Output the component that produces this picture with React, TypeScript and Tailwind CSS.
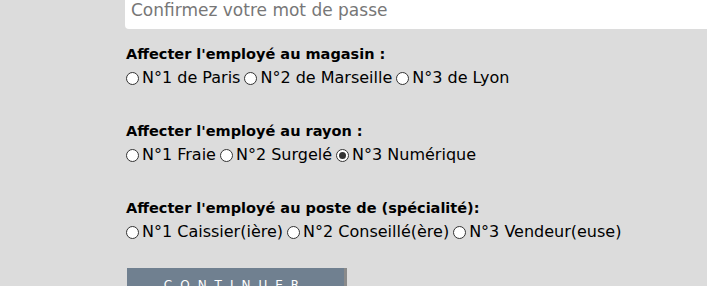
import React from "react";

interface IRadioGroupProps {
  title: string;
  name: string;
  options: string[];
  checked?: number;
}

function Radio({ on }: { on: boolean }) {
  return (
    <span className="inline-flex h-[13px] w-[13px] shrink-0 items-center justify-center rounded-full border border-[#333] bg-white">
      {on && <span className="h-[7px] w-[7px] rounded-full bg-[#333]" />}
    </span>
  );
}

function RadioGroup({ title, name, options, checked }: IRadioGroupProps) {
  return (
    <div className="flex flex-col">
      <p className="font-bold text-[14.5px] leading-[20px] text-black">{title}</p>
      <div className="mt-[2px] flex items-center text-[16px] leading-[24px] text-black">
        {options.map((opt, i) => (
          <label key={name + i} className="flex items-center gap-[3px] mr-[4px]">
            <Radio on={checked === i} />
            <span>{opt}</span>
          </label>
        ))}
      </div>
    </div>
  );
}

export default function App(): React.ReactNode {
  return (
    <div
      className="h-[286px] w-[707px] overflow-hidden bg-[#dcdcdc] pl-[125px]"
      style={{ fontFamily: '"Comic Sans MS", "DejaVu Sans", sans-serif' }}
    >
      <div className="mt-[-14px] flex h-[43px] items-end rounded-bl-[4px] bg-white pb-[7px] pl-[6px]">
        <span className="text-[17px] leading-[24px] text-[#777]">
          Confirmez votre mot de passe
        </span>
      </div>
      <div className="mt-[15px] flex flex-col gap-[31px] pl-[1px]">
        <RadioGroup
          title="Affecter l'employé au magasin :"
          name="magasin"
          options={["N°1 de Paris", "N°2 de Marseille", "N°3 de Lyon"]}
        />
        <RadioGroup
          title="Affecter l'employé au rayon :"
          name="rayon"
          options={["N°1 Fraie", "N°2 Surgelé", "N°3 Numérique"]}
          checked={2}
        />
        <RadioGroup
          title="Affecter l'employé au poste de (spécialité):"
          name="poste"
          options={["N°1 Caissier(ière)", "N°2 Conseillé(ère)", "N°3 Vendeur(euse)"]}
        />
      </div>
      <button className="mt-[24px] ml-[2px] h-[40px] w-[220px] border-r-[3px] border-[#8a8a8a] bg-[#708090] pb-[6px] text-[12px] tracking-[8px] text-white">
        CONTINUER
      </button>
    </div>
  );
}
